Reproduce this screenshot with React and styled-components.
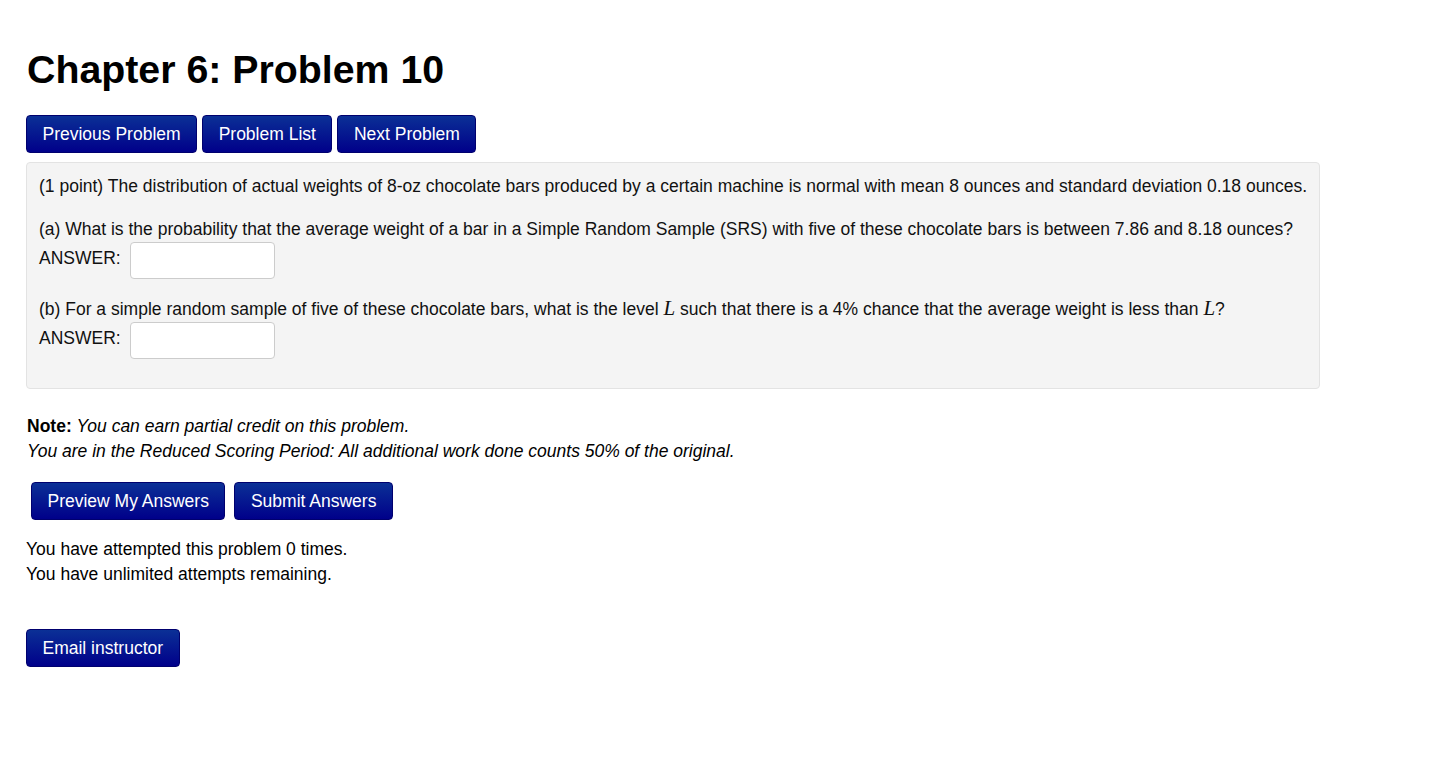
import React from "react";
import styled, { createGlobalStyle } from "styled-components";

const GlobalStyle = createGlobalStyle`
  html, body {
    margin: 0;
    padding: 0;
    background: #fff;
  }
  body {
    font-family: "Liberation Sans", Arial, sans-serif;
    font-size: 17.5px;
    color: #111;
  }
`;

const Page = styled.div`
  padding: 0 26px;
  width: 1294px;
`;

const Title = styled.h1`
  margin: 0;
  padding: 46px 0 0 1px;
  font-size: 39.3px;
  line-height: 46px;
  font-weight: bold;
  color: #000;
`;

const ButtonRow = styled.div`
  display: flex;
  gap: ${ props => props.gap || 5 }px;
  margin-top: ${ props => props.top || 0 }px;
  padding-left: ${ props => props.indent || 0 }px;
`;

const Button = styled.button`
  height: 38px;
  padding: 0 15.5px;
  font-family: "Liberation Sans", Arial, sans-serif;
  font-size: 17.5px;
  color: #fff;
  border: 1px solid #00006e;
  border-radius: 4px;
  background: linear-gradient(to bottom, #0b3096 0%, #00008a 100%);
  cursor: pointer;
  white-space: nowrap;
`;

const Panel = styled.div`
  margin-top: 9px;
  padding: 13px 4px 29px 12px;
  background: #f4f4f4;
  border: 1px solid #e3e3e3;
  border-radius: 4px;
  line-height: 20px;
`;

const Question = styled.div`
  margin-top: ${ props => props.top || 0 }px;
`;

const AnswerRow = styled.div`
  display: flex;
  align-items: flex-start;
  gap: 9px;
  margin-top: 3px;
`;

const AnswerLabel = styled.span`
  margin-top: 6px;
`;

const AnswerInput = styled.input`
  box-sizing: border-box;
  width: 145px;
  height: 37px;
  border: 1px solid #ccc;
  border-radius: 4px;
  background: #fff;
  padding: 4px 8px;
  font-size: 17.5px;
`;

const MathVar = styled.span`
  font-family: "Liberation Serif", "Times New Roman", serif;
  font-style: italic;
  font-size: 21px;
`;

const Notes = styled.div`
  margin-top: 25px;
  padding-left: 1px;
  line-height: 25px;
  color: #000;

  & em {
    font-style: italic;
  }
`;

const Status = styled.div`
  margin-top: 17px;
  line-height: 25px;
  color: #000;
`;

const Footer = styled.div`
  margin-top: 42px;
`;

export default function App() {
  return (
    <Page>
      <GlobalStyle />
      <Title>Chapter 6: Problem 10</Title>
      <ButtonRow top={23}>
        <Button>Previous Problem</Button>
        <Button>Problem List</Button>
        <Button>Next Problem</Button>
      </ButtonRow>
      <Panel>
        <Question>
          (1 point) The distribution of actual weights of 8-oz chocolate bars produced by a certain machine is normal with mean 8 ounces and standard deviation 0.18 ounces.
        </Question>
        <Question top={23}>
          (a) What is the probability that the average weight of a bar in a Simple Random Sample (SRS) with five of these chocolate bars is between 7.86 and 8.18 ounces?
        </Question>
        <AnswerRow>
          <AnswerLabel>ANSWER:</AnswerLabel>
          <AnswerInput type="text" />
        </AnswerRow>
        <Question top={19}>
          (b) For a simple random sample of five of these chocolate bars, what is the level <MathVar>L</MathVar> such that there is a 4% chance that the average weight is less than <MathVar>L</MathVar>?
        </Question>
        <AnswerRow>
          <AnswerLabel>ANSWER:</AnswerLabel>
          <AnswerInput type="text" />
        </AnswerRow>
      </Panel>
      <Notes>
        <b>Note:</b> <em>You can earn partial credit on this problem.</em>
        <br />
        <em>You are in the Reduced Scoring Period: All additional work done counts 50% of the original.</em>
      </Notes>
      <ButtonRow top={18} gap={9} indent={5}>
        <Button>Preview My Answers</Button>
        <Button>Submit Answers</Button>
      </ButtonRow>
      <Status>
        You have attempted this problem 0 times.
        <br />
        You have unlimited attempts remaining.
      </Status>
      <Footer>
        <Button>Email instructor</Button>
      </Footer>
    </Page>
  );
}
